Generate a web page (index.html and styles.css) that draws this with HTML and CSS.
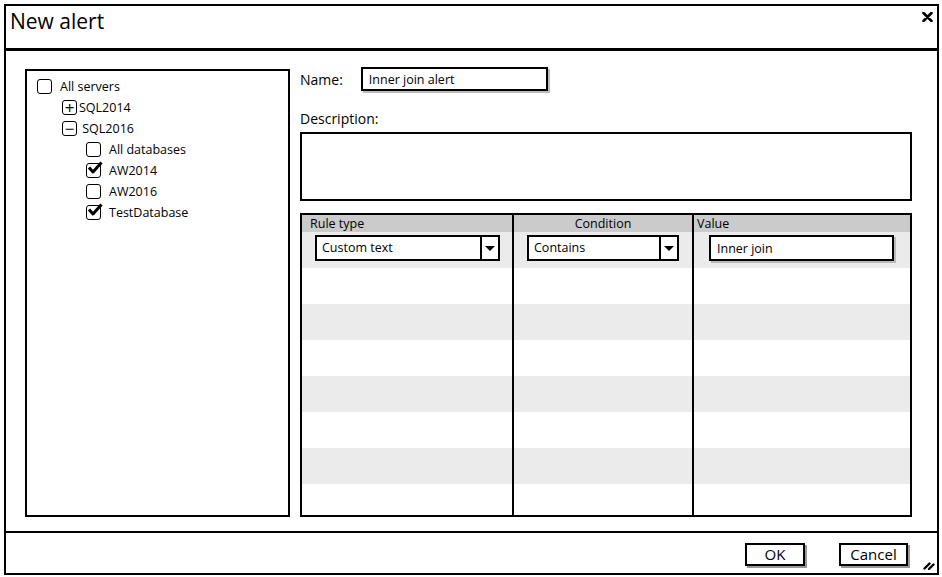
FILE: index.html
```html
<!DOCTYPE html>
<html lang="en">
<head>
  <meta charset="UTF-8">
  <title>New alert</title>
  <link rel="stylesheet" href="styles.css">
</head>
<body>
  <div class="window">
    <div class="titlebar">
      <span class="title">New alert</span>
      <svg class="close" width="11" height="10" viewBox="0 0 11 10"><path d="M1.5 1 L9.5 9 M9.5 1 L1.5 9" stroke="#000" stroke-width="2.6" stroke-linecap="round"/></svg>
    </div>

    <div class="content">
      <div class="tree">
        <div class="item lvl1"><span class="check"></span>All servers</div>
        <div class="item lvl2"><span class="expander">+</span>SQL2014</div>
        <div class="item lvl2"><span class="expander minus">&minus;</span>&nbsp;SQL2016</div>
        <div class="item lvl3"><span class="check"></span>All databases</div>
        <div class="item lvl3"><span class="check on"><svg width="16" height="14" viewBox="0 0 16 14"><path d="M2 6.5 L6 11 L14.5 1.5" fill="none" stroke="#000" stroke-width="3" stroke-linejoin="round"/></svg></span>AW2014</div>
        <div class="item lvl3"><span class="check"></span>AW2016</div>
        <div class="item lvl3"><span class="check on"><svg width="16" height="14" viewBox="0 0 16 14"><path d="M2 6.5 L6 11 L14.5 1.5" fill="none" stroke="#000" stroke-width="3" stroke-linejoin="round"/></svg></span>TestDatabase</div>
      </div>

      <div class="form">
        <div class="name-row">
          <label>Name:</label>
          <div class="input name-input">Inner join alert</div>
        </div>
        <label class="desc-label">Description:</label>
        <div class="textarea"></div>

        <div class="grid">
          <div class="row head">
            <div class="cell">Rule type</div>
            <div class="cell center">Condition</div>
            <div class="cell tight">Value</div>
          </div>
          <div class="row alt">
            <div class="cell"><div class="select w185"><span>Custom text</span><i class="arrow"></i></div></div>
            <div class="cell"><div class="select w152"><span>Contains</span><i class="arrow"></i></div></div>
            <div class="cell val"><div class="input value-input">Inner join</div></div>
          </div>
          <div class="row"><div class="cell"></div><div class="cell"></div><div class="cell"></div></div>
          <div class="row alt"><div class="cell"></div><div class="cell"></div><div class="cell"></div></div>
          <div class="row"><div class="cell"></div><div class="cell"></div><div class="cell"></div></div>
          <div class="row alt"><div class="cell"></div><div class="cell"></div><div class="cell"></div></div>
          <div class="row"><div class="cell"></div><div class="cell"></div><div class="cell"></div></div>
          <div class="row alt"><div class="cell"></div><div class="cell"></div><div class="cell"></div></div>
          <div class="row last"><div class="cell"></div><div class="cell"></div><div class="cell"></div></div>
        </div>
      </div>
    </div>

    <div class="footer">
      <button class="btn ok">OK</button>
      <button class="btn cancel">Cancel</button>
    </div>

    <svg class="grip" width="12" height="11" viewBox="0 0 12 11"><path d="M1.5 9.5 L6.5 4.5 M6 10 L10.5 5.5" stroke="#000" stroke-width="2.4" stroke-linecap="round"/></svg>
  </div>
</body>
</html>
```

FILE: styles.css
```css
body {
  margin: 0;
  background: #fff;
  font-family: 'Open Sans', 'Liberation Sans', sans-serif;
  color: #000;
}
.window {
  position: relative;
  box-sizing: border-box;
  margin: 4px 0 0 4px;
  width: 935px;
  height: 571px;
  border: 2px solid #000;
  display: flex;
  flex-direction: column;
}
.titlebar {
  height: 42px;
  border-bottom: 3px solid #000;
  display: flex;
  justify-content: space-between;
  align-items: flex-start;
  padding: 0 4px 0 4px;
}
.title {
  font-size: 21px;
  line-height: 30px;
}
.close {
  margin-top: 6px;
}
.content {
  flex: 1;
  display: flex;
  gap: 10px;
  padding: 18px 25px 14px 19px;
}
.tree {
  box-sizing: border-box;
  width: 265px;
  border: 2px solid #000;
  padding: 5px 0 0 10px;
  font-size: 12.5px;
}
.item {
  display: flex;
  align-items: center;
  height: 21px;
}
.lvl2 { padding-left: 25px; }
.lvl3 { padding-left: 49px; }
.check {
  position: relative;
  box-sizing: border-box;
  width: 15px;
  height: 15px;
  border: 1.6px solid #000;
  border-radius: 3px;
  margin-right: 8px;
}
.check svg {
  position: absolute;
  left: 0;
  top: -3px;
}
.expander {
  box-sizing: border-box;
  width: 15px;
  height: 15px;
  border: 1.6px solid #000;
  border-radius: 3px;
  display: flex;
  align-items: center;
  justify-content: center;
  font-size: 17px;
  line-height: 1;
  margin-right: 2px;
}
.form {
  flex: 1;
  display: flex;
  flex-direction: column;
}
.name-row {
  display: flex;
  align-items: center;
  gap: 18px;
  font-size: 14px;
  margin-top: -2px;
}
.input {
  box-sizing: border-box;
  border: 2px solid #000;
  box-shadow: 2px 2px 0 #bbb;
  background: #fff;
  font-size: 12.5px;
  display: flex;
  align-items: center;
  padding-left: 6px;
}
.name-input {
  width: 187px;
  height: 24px;
}
.desc-label {
  font-size: 14px;
  margin-top: 18px;
}
.textarea {
  box-sizing: border-box;
  height: 69px;
  border: 2px solid #000;
  margin-top: 4px;
}
.grid {
  flex: 1;
  box-sizing: border-box;
  margin-top: 12px;
  border: 2px solid #000;
  display: flex;
  flex-direction: column;
}
.row {
  display: grid;
  grid-template-columns: 212px 180px 1fr;
  height: 36px;
}
.row.alt { background: #ebebeb; }
.row.last { flex: 1; }
.row.head {
  height: 17px;
  background: #cbcbcb;
  font-size: 12.5px;
  line-height: 17px;
}
.cell {
  box-sizing: border-box;
  border-right: 2px solid #000;
  padding-left: 8px;
}
.cell:last-child { border-right: none; }
.head .cell.center { text-align: center; padding-left: 0; }
.head .cell.tight { padding-left: 3px; }
.alt:nth-child(2) .cell {
  padding: 3px 0 0 13px;
}
.alt:nth-child(2) .cell.val { padding-left: 15px; }
.select {
  box-sizing: border-box;
  height: 26px;
  border: 2px solid #000;
  background: #fff;
  display: flex;
  font-size: 12.5px;
}
.select span {
  flex: 1;
  padding-left: 5px;
  line-height: 22px;
}
.w185 { width: 185px; }
.w152 { width: 152px; }
.arrow {
  width: 16px;
  border-left: 2px solid #000;
  position: relative;
}
.arrow::after {
  content: "";
  position: absolute;
  left: 3px;
  top: 9px;
  border-left: 5px solid transparent;
  border-right: 5px solid transparent;
  border-top: 5px solid #000;
}
.value-input {
  width: 185px;
  height: 26px;
}
.footer {
  height: 40px;
  border-top: 2px solid #000;
  display: flex;
  justify-content: flex-end;
  align-items: center;
  gap: 34px;
  padding-right: 29px;
}
.btn {
  box-sizing: border-box;
  height: 23px;
  border: 2px solid #000;
  background: #fff;
  box-shadow: 2px 2px 0 #999;
  font-family: 'Open Sans', 'Liberation Sans', sans-serif;
  font-size: 15px;
  line-height: 1;
  padding: 0;
  margin-top: 2px;
}
.ok { width: 60px; }
.cancel { width: 69px; }
.grip {
  position: absolute;
  right: 2px;
  bottom: 3px;
}
```
